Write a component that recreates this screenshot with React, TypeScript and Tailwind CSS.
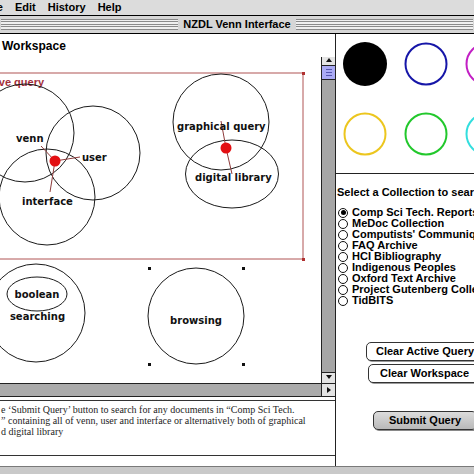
import React from 'react';

const collections = [
  'Comp Sci Tech. Reports',
  'MeDoc Collection',
  "Computists' Communique",
  'FAQ Archive',
  'HCI Bibliography',
  'Indigenous Peoples',
  'Oxford Text Archive',
  'Project Gutenberg Collection',
  'TidBITS',
];

const stripes =
  'h-[11px] flex-1 bg-[image:repeating-linear-gradient(to_bottom,#8a8a8a_0px,#8a8a8a_1px,#efefef_1px,#efefef_2.5px)]';

function Arrow({ dir }: { dir: 'up' | 'down' | 'right' }) {
  const points = dir === 'up' ? '1,5 4,1 7,5' : dir === 'down' ? '1,1 4,5 7,1' : '2,1 6,4 2,7';
  return (
    <svg width="8" height="8" viewBox="0 0 8 8">
      <polygon points={points} fill="#111" />
    </svg>
  );
}

function Workspace() {
  const label = { fontFamily: 'DejaVu Sans, sans-serif', fontWeight: 700, fontSize: 10 } as const;
  const line = '#8e3b3b';
  return (
    <svg className="absolute left-0 top-0" width="321" height="326" viewBox="0 57 321 326">
      {/* active query selection */}
      <rect x="-20" y="73" width="323" height="186" fill="none" stroke="#b05454" strokeWidth="1" />
      <rect x="302" y="72" width="3" height="3" fill="#b03030" />
      <rect x="302" y="258" width="3" height="3" fill="#b03030" />
      <text x="-22" y="86" fill="#a3303c" style={{ ...label, fontFamily: 'Liberation Sans, sans-serif', fontSize: 11 }}>
        Active query
      </text>

      <g fill="none" stroke="#1a1a1a" strokeWidth="1">
        <circle cx="25" cy="133" r="49" />
        <circle cx="93" cy="153" r="47" />
        <circle cx="47" cy="197" r="48" />
        <circle cx="221" cy="122" r="48" />
        <ellipse cx="232" cy="174" rx="46.5" ry="34" />
        <circle cx="36" cy="313" r="49" />
        <ellipse cx="37" cy="294" rx="30" ry="17" />
        <circle cx="196" cy="316" r="48" />
      </g>
      <g stroke={line} strokeWidth="1">
        <line x1="41" y1="146" x2="55" y2="161" />
        <line x1="80" y1="157" x2="55" y2="161" />
        <line x1="50" y1="192" x2="55" y2="161" />
        <line x1="221" y1="121" x2="226" y2="148" />
        <line x1="226" y1="148" x2="232" y2="174" />
      </g>
      <circle cx="55" cy="161" r="5.5" fill="#e30f12" />
      <circle cx="226" cy="148" r="5.5" fill="#e30f12" />

      <g fill="#111" style={label}>
        <text x="16" y="141.5">venn</text>
        <text x="82" y="160.5">user</text>
        <text x="22" y="204.5">interface</text>
        <text x="177" y="129.5">graphical query</text>
        <text x="195" y="180.5">digital library</text>
        <text x="37" y="297.5" textAnchor="middle">boolean</text>
        <text x="37.5" y="319.5" textAnchor="middle">searching</text>
        <text x="196" y="323.5" textAnchor="middle">browsing</text>
      </g>

      {/* selection handles around browsing */}
      <g fill="#111">
        <rect x="148" y="267" width="3" height="3" />
        <rect x="242" y="267" width="3" height="3" />
        <rect x="148" y="363" width="3" height="3" />
        <rect x="242" y="363" width="3" height="3" />
      </g>
    </svg>
  );
}

function Palette() {
  return (
    <svg className="absolute left-0 top-0" width="138" height="139" viewBox="336 34 138 139">
      <circle cx="365" cy="64" r="22" fill="#000" />
      <g fill="none" strokeWidth="2">
        <circle cx="426" cy="64" r="20.5" stroke="#1616a8" />
        <circle cx="487" cy="64" r="20.5" stroke="#c21fc4" />
        <circle cx="365" cy="134" r="20.5" stroke="#ecc61e" />
        <circle cx="426" cy="134" r="20.5" stroke="#22c82c" />
        <circle cx="487" cy="134" r="20.5" stroke="#33dede" />
      </g>
    </svg>
  );
}

export default function App() {
  return (
    <div className="h-[474px] w-[474px] overflow-hidden bg-white font-['Liberation_Sans',Arial,sans-serif] text-black">
      <div className="flex h-[16px] items-center gap-[12px] border-b border-black bg-[#dcdcdc] text-[11px] font-bold leading-none">
        <span className="-ml-[16px]">File</span>
        <span>Edit</span>
        <span>History</span>
        <span>Help</span>
      </div>

      <div className="flex h-[18px] items-center gap-[5px] border-b border-black bg-[#d6d6d6] px-[1px]">
        <div className={stripes} />
        <span className="text-[11px] font-bold leading-none">NZDL Venn Interface</span>
        <div className={stripes} />
      </div>

      <div className="flex h-[432px]">
        <div className="flex w-[336px] flex-col border-r border-[#222]">
          <div className="h-[23px] pl-[2px] pt-[6px] text-[12px] font-bold leading-none">Workspace</div>

          <div className="flex h-[340px]">
            <div className="flex w-[321px] flex-col">
              <div className="relative h-[326px] overflow-hidden bg-white">
                <Workspace />
              </div>
              <div className="h-[14px] border-y border-[#222] bg-[#ababab]" />
            </div>
            <div className="flex w-[14px] flex-col border-l border-[#222]">
              <div className="flex h-[9px] items-center justify-center border-b border-[#222] bg-[#e4e4e4]">
                <Arrow dir="up" />
              </div>
              <div className="flex h-[14px] flex-col items-center justify-center gap-[2px] border-b border-[#222] bg-[#aaaaf4]">
                <div className="h-px w-[6px] bg-[#5656b0]" />
                <div className="h-px w-[6px] bg-[#5656b0]" />
                <div className="h-px w-[6px] bg-[#5656b0]" />
              </div>
              <div className="flex-1 bg-[#a6a6a6]" />
              <div className="flex h-[11px] items-center justify-center border-t border-[#222] bg-[#e4e4e4]">
                <Arrow dir="down" />
              </div>
              <div className="flex h-[14px] items-center justify-center border-y border-[#222] bg-[#e4e4e4]">
                <Arrow dir="right" />
              </div>
            </div>
          </div>

          <div className="mt-[3px] h-[56px] whitespace-nowrap border-y border-[#333] bg-white pl-[1px] pt-[3px] font-['Liberation_Serif',serif] text-[10px] leading-[11px] text-[#1e1e1e]">
            <div>e ‘Submit Query’ button to search for any documents in “Comp Sci Tech.</div>
            <div>” containing all of venn, user and interface or alternatively both of graphical</div>
            <div>d digital library</div>
          </div>
        </div>

        <div className="flex flex-1 flex-col items-start overflow-hidden whitespace-nowrap">
          <div className="relative h-[140px] w-full shrink-0 border-b border-[#222]">
            <Palette />
          </div>
          <div className="mt-[13px] pl-[1px] text-[11px] font-bold leading-none">Select a Collection to search</div>
          <div className="mt-[9px] flex flex-col">
            {collections.map((name, i) => (
              <label key={name} className="flex h-[11px] items-center gap-[4px] pl-[2px] text-[11px] font-bold leading-none">
                <span className="flex h-[10px] w-[10px] shrink-0 items-center justify-center rounded-full border border-[#111] bg-white">
                  {i === 0 ? <span className="h-[5px] w-[5px] rounded-full bg-black" /> : null}
                </span>
                {name}
              </label>
            ))}
          </div>

          <button
            type="button"
            className="ml-[30px] mt-[36px] h-[19px] shrink-0 rounded-[5px] border border-[#333] bg-white px-[9px] text-[11px] font-bold leading-none shadow-[1px_1px_0_#9a9a9a]"
          >
            Clear Active Query
          </button>
          <button
            type="button"
            className="ml-[32px] mt-[3px] h-[19px] shrink-0 rounded-[5px] border border-[#333] bg-white px-[11px] text-[11px] font-bold leading-none shadow-[1px_1px_0_#9a9a9a]"
          >
            Clear Workspace
          </button>
          <button
            type="button"
            className="ml-[37px] mt-[28px] h-[19px] shrink-0 rounded-[5px] border border-[#333] bg-[linear-gradient(#dcdcdc,#b9b9b9)] px-[15px] text-[11px] font-bold leading-none shadow-[1px_1px_0_#8a8a8a]"
          >
            Submit Query
          </button>
        </div>
      </div>

      <div className="h-[8px] border-t border-[#7a7a7a] bg-[#c9c9c9]" />
    </div>
  );
}
